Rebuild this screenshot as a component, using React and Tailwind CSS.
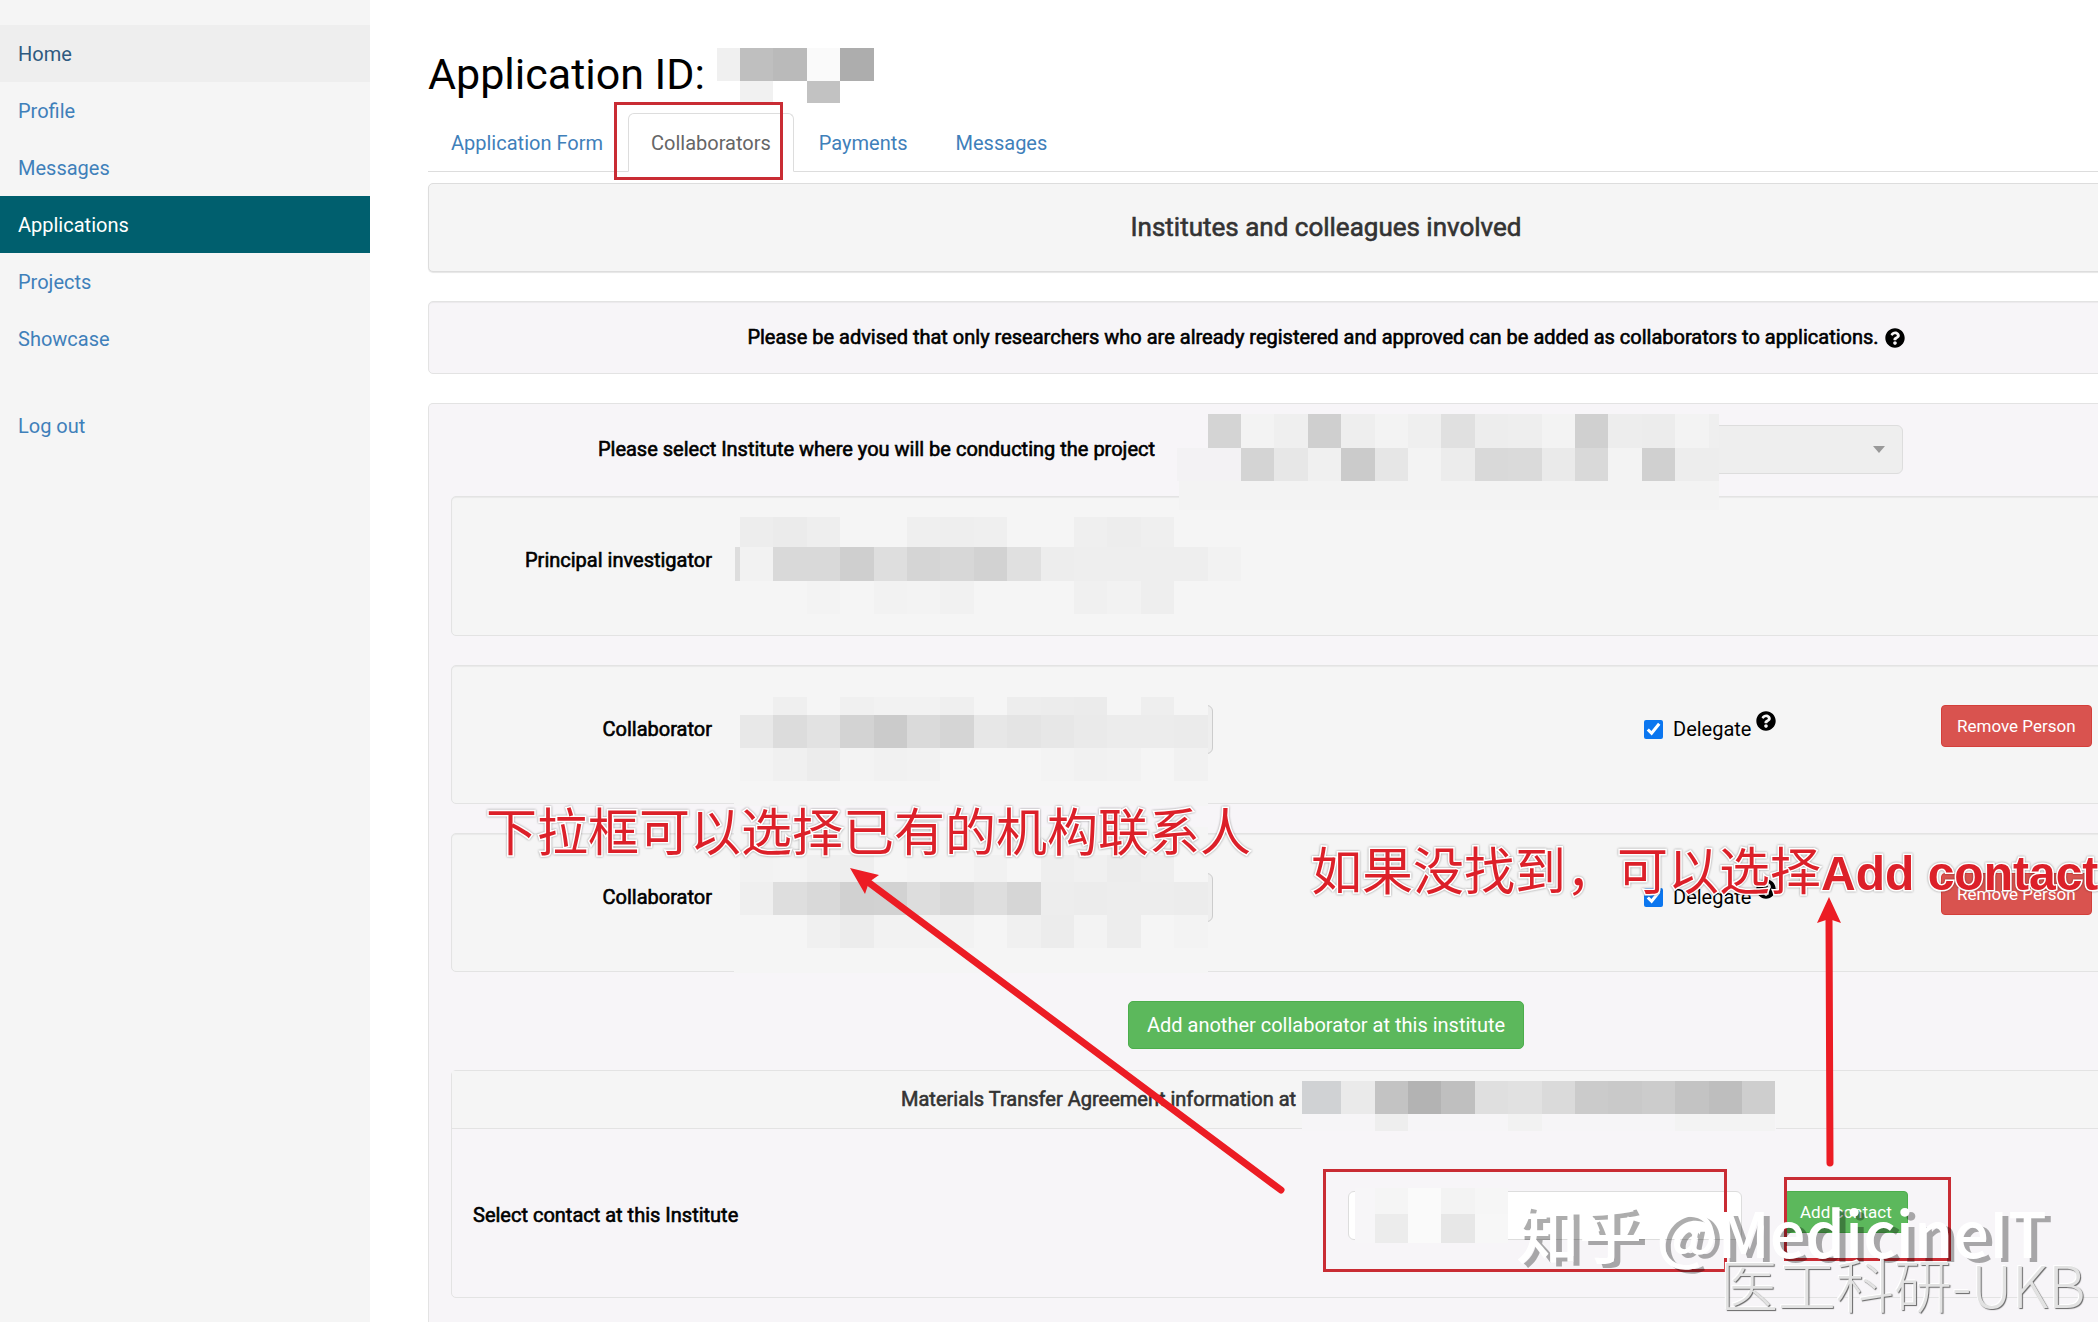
import { FaQuestionCircle } from 'react-icons/fa';

const navItems = ['Home', 'Profile', 'Messages', 'Applications', 'Projects', 'Showcase'];
const tabs = ['Application Form', 'Collaborators', 'Payments', 'Messages'];
const collaborators = [1, 2];

const well = 'rounded-[5px] border border-[#e3e3e3] shadow-[inset_0_1px_1px_rgba(0,0,0,0.05)]';
const bold = '[-webkit-text-stroke:0.6px_currentColor]';
const note =
  "absolute font-['Noto_Sans_CJK_SC',sans-serif] text-[51px] leading-[76px] whitespace-nowrap text-[#dc2029] [-webkit-text-stroke:3px_#fff] [paint-order:stroke_fill] drop-shadow-[0_0_1px_rgba(0,0,0,0.4)]";

// Pixelated strips. Every row is [y, height, first column, grey level of each column];
// '' leaves a column untouched.
const COL = 33.4;
const ORIGIN = 740;
const strips = [
  // application id
  [48, 33, 0, 'bf ba fa ad'],
  [81, 22, 0, 'f1  c2'],
  // institute
  [414, 34, 14, 'd4 f3 ef cf ee f3 ef e0 ed ee f3 d0 ed ec f3'],
  [448, 33, 15, 'd4 e7 f0 cb e6 f3 ec d9 da ea d9 f3 d0 ed'],
  // principal investigator
  [517, 30, 0, 'ed eb ee   ef ee ef   ef ed ef'],
  [547, 34, 0, 'f2 d9 d9 cf de d5 d7 d2 e0 ed ee ee ee ee f2'],
  [581, 33, 0, '  f3  f2 f3 f1    f0 f2 ee'],
  // first collaborator
  [697, 18, 0, ' ef  f0 f2 f2 ef  ed ec eb  ee'],
  [715, 33, 0, 'e8 dc e2 d3 cb da d5 e7 e4 e7 ea ec ec eb'],
  [748, 33, 0, 'f3 f0 ec f3 f1 f2    f3 f1 f2 f5 f1'],
  // second collaborator
  [855, 27, 0, 'f2 f3 ef ee f5 f3 f4 f1 f5 ee f0 ec ee'],
  [882, 33, 0, 'ef de d9 d1 d2 dd d8 de d6 ed ec ed ed ec'],
  [915, 33, 0, '  f0 ec f2 f2 f2 f5 f0 ec f3 ed  f3'],
  // agreement institute
  [1081, 33, 18, 'ea c3 b3 bf df e1 da cb c9 cc c3 be ce'],
  [1114, 17, 19, 'ee    f2     f3 f3 f3'],
  // contact
  [1188, 26, 19, 'f5 fa f3 f6'],
  [1214, 29, 19, 'ec fa e7 f7'],
];

// Plain patches under and beside the strips: [x, y, width, height, colour]
const patches = [
  [717, 48, 23, 33, '#f0f0f0'],
  [1177, 414, 31, 34, '#f7f5f8'],
  [1177, 448, 64, 33, '#f3f2f4'],
  [1179, 481, 540, 29, '#f3f3f3'],
  [1708, 414, 11, 34, '#efefef'],
  [1708, 448, 11, 33, '#ededed'],
  [734, 690, 474, 116, '#f5f5f5'],
  [734, 827, 474, 146, '#f5f5f5'],
  [735, 547, 5, 34, '#dddddd'],
  [1302, 1081, 40, 33, '#d0d2d4'],
  [1302, 1114, 474, 17, '#f6f5f7'],
  [1355, 1188, 153, 55, '#f7f6f8'],
];

function Pixelation() {
  return (
    <g shapeRendering="crispEdges">
      {patches.map(([x, y, w, h, fill]) => (
        <rect key={`${x}-${y}`} x={x} y={y} width={w} height={h} fill={fill} />
      ))}
      {strips.map(([y, h, first, levels]) =>
        levels.split(' ').map((level, i) =>
          level ? (
            <rect
              key={`${y}-${i}`}
              x={ORIGIN + (first + i) * COL}
              y={y}
              width={COL}
              height={h}
              fill={`#${level}${level}${level}`}
            />
          ) : null
        )
      )}
    </g>
  );
}

function Annotations() {
  return (
    <div className="pointer-events-none absolute inset-0 overflow-hidden">
      <svg className="absolute top-0 left-0" width="2098" height="1322" viewBox="0 0 2098 1322">
        <Pixelation />
        <g fill="none" stroke="#c92c34" strokeWidth="3">
          <rect x="615.5" y="103.5" width="166" height="75" />
          <rect x="1324.5" y="1170.5" width="401" height="100" />
          <rect x="1785.5" y="1178.5" width="164" height="81" />
        </g>
      </svg>

      <p className={`top-[791px] left-[486px] ${note}`}>下拉框可以选择已有的机构联系人</p>
      <p className={`top-[830px] left-[1311px] ${note}`}>
        如果没找到，可以选择
        <span className="font-['Liberation_Sans',sans-serif] text-[48px] font-bold">Add contact</span>
      </p>

      <svg className="absolute top-0 left-0" width="2098" height="1322" viewBox="0 0 2098 1322">
        <g stroke="#ec1c24" strokeWidth="7" strokeLinecap="round" fill="#ec1c24">
          <path d="M868 882 1281 1190" />
          <path d="M1829 918 1830 1163" />
          <g stroke="none">
            <path d="M850 868 879 875 869 882 865 894Z" />
            <path d="M1829 897 1841 923 1829 919 1817 923Z" />
          </g>
        </g>
      </svg>

      <p className="absolute top-[1186px] left-[1516px] font-['Noto_Sans_CJK_SC',sans-serif] text-[63px] leading-[90px] font-medium whitespace-nowrap text-white [text-shadow:6px_4px_0_rgba(0,0,0,0.32)]">
        知乎 @MedicineIT
      </p>
      <p className="absolute top-[1245px] left-[1720px] font-['Noto_Sans_CJK_SC',sans-serif] text-[58px] leading-[76px] font-light whitespace-nowrap text-[#e2e2e2] [text-shadow:1px_1px_1px_#666,-1px_-1px_0_#fff]">
        医工科研-UKB
      </p>
    </div>
  );
}

function Collaborator({ id }) {
  return (
    <div className={`mb-[29px] flex h-[139px] items-start bg-[#f5f5f5] px-[22px] pt-[39px] ${well}`}>
      <label htmlFor={`person-${id}`} className={`w-[238px] text-right leading-[49px] ${bold}`}>
        Collaborator
      </label>
      <select
        id={`person-${id}`}
        disabled
        className="ml-[23px] h-[49px] w-[478px] appearance-none rounded-[6px] border border-[#ccc] bg-[#eee]"
      />
      <div className="ml-auto flex h-[49px] w-[297px] items-center">
        <input
          id={`delegate-${id}`}
          type="checkbox"
          defaultChecked
          className="size-[19px] accent-[#0b76ef]"
        />
        <label htmlFor={`delegate-${id}`} className="ml-[10px]">Delegate</label>
        <FaQuestionCircle className="mt-[6px] ml-[5px] size-5 self-start" />
      </div>
      <div className="w-[237px]">
        <button className="h-[42px] rounded-[4px] border border-[#d43f3a] bg-[#d9534f] px-[15px] text-[17px] text-white">
          Remove Person
        </button>
      </div>
    </div>
  );
}

export default function App() {
  return (
    <div className="relative flex min-h-screen overflow-hidden bg-white font-['Roboto',sans-serif] text-[20px] leading-[29px] text-black">
      <nav className="w-[370px] shrink-0 bg-[#f5f5f5] pt-[25px]">
        {navItems.map((item) => (
          <a
            key={item}
            href="#"
            className={`block px-[18px] pt-[15px] pb-[13px] ${
              item === 'Applications'
                ? 'bg-[#005f6e] text-white'
                : item === 'Home'
                  ? 'bg-[#eee] text-[#2e5a80]'
                  : 'text-[#3f80ba]'
            }`}
          >
            {item}
          </a>
        ))}
        <a href="#" className="mt-[30px] block px-[18px] pt-[15px] pb-[13px] text-[#3f80ba]">Log out</a>
      </nav>

      {/* the form is wider than the window and runs off its right edge */}
      <main className="-mr-[126px] min-w-0 flex-1 pt-[50px] pl-[58px]">
        <h1 className="text-[43px] leading-[48px]">Application ID:</h1>

        <div className="mt-[15px] flex border-b border-[#ddd]">
          {tabs.map((tab) => (
            <a
              key={tab}
              href="#"
              className={`mr-[2px] -mb-px rounded-t-[6px] border px-[22px] pt-[15px] pb-[13px] ${
                tab === 'Collaborators'
                  ? 'border-[#ddd] border-b-white bg-white text-[#666]'
                  : 'border-transparent text-[#3f80ba]'
              }`}
            >
              {tab}
            </a>
          ))}
        </div>

        <div className="mt-[11px] rounded-[5px] border border-[#ddd] bg-[#f5f5f5] py-[29px] text-center shadow-[0_1px_1px_rgba(0,0,0,0.1)]">
          <h2 className={`text-[26px] text-[#333] ${bold}`}>Institutes and colleagues involved</h2>
        </div>

        <div className={`mt-[29px] flex h-[73px] items-center justify-center bg-[#f7f5f8] ${well}`}>
          <p className={bold}>
            Please be advised that only researchers who are already registered and approved can be added as
            collaborators to applications.
          </p>
          <FaQuestionCircle className="ml-[6px] size-5" />
        </div>

        <div className="mt-[29px] rounded-t-[5px] border border-b-0 border-[#e3e3e3] bg-[#f7f5f8] px-[22px] pt-[21px] pb-6">
          <div className="mb-[22px] flex">
            <label htmlFor="institute" className={`w-[704px] text-right leading-[49px] ${bold}`}>
              Please select Institute where you will be conducting the project
            </label>
            <div className="relative ml-6 w-[724px]">
              <select
                id="institute"
                disabled
                className="block h-[49px] w-full appearance-none rounded-[6px] border border-[#ddd] bg-[#eee]"
              />
              <svg className="absolute top-[21px] right-[18px]" width="12" height="7" viewBox="0 0 12 7">
                <path d="M0 0H12L6 7Z" fill="#999" />
              </svg>
            </div>
          </div>

          <div className={`mb-[29px] flex h-[140px] bg-[#f5f5f5] px-[22px] pt-[39px] ${well}`}>
            <p className={`w-[238px] text-right leading-[49px] ${bold}`}>Principal investigator</p>
          </div>

          {collaborators.map((id) => (
            <Collaborator key={id} id={id} />
          ))}

          <div className="text-center">
            <button className="h-[48px] rounded-[5px] border border-[#4cae4c] bg-[#5cb85c] px-[18px] text-white">
              Add another collaborator at this institute
            </button>
          </div>

          <section className="mt-[21px] rounded-[5px] border border-[#e3e3e3]">
            <header className="flex h-[58px] items-center justify-center border-b border-[#e3e3e3] bg-[#f5f5f5]">
              <h3 className={`w-[850px] text-[#333] ${bold}`}>Materials Transfer Agreement information at</h3>
            </header>
            <div className="flex px-[21px] pt-[62px] pb-[57px]">
              <label htmlFor="contact" className={`w-[875px] leading-[49px] ${bold}`}>
                Select contact at this Institute
              </label>
              <select
                id="contact"
                className="h-[49px] w-[394px] appearance-none rounded-[6px] border border-[#ddd] bg-white"
              />
              <button className="ml-[42px] h-[42px] rounded-[4px] border border-[#4cae4c] bg-[#5cb85c] px-[15px] text-[17px] text-white">
                Add contact
              </button>
            </div>
          </section>
        </div>
      </main>

      <Annotations />
    </div>
  );
}
